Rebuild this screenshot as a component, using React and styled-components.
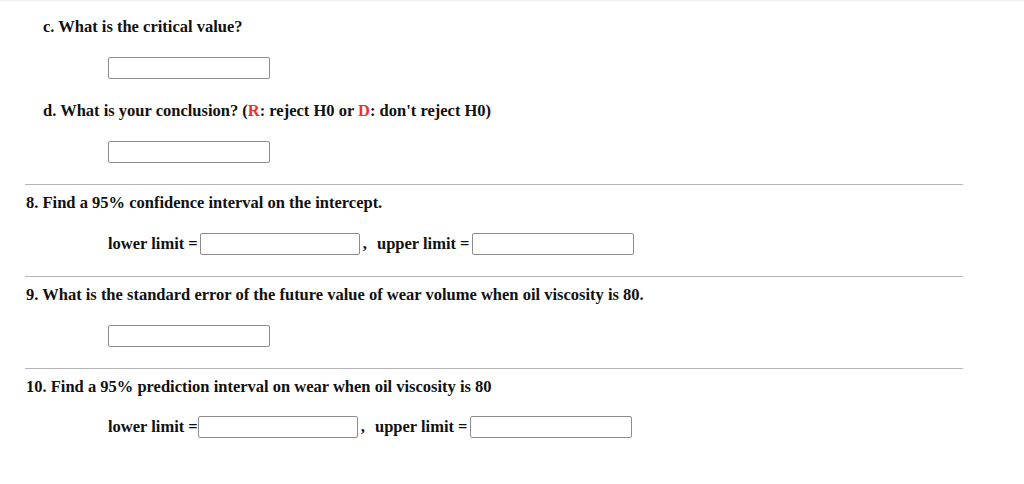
import React from 'react'
import styled, { createGlobalStyle } from 'styled-components'

const GlobalStyle = createGlobalStyle`
  body {
    margin: 0;
    background: #fff;
    font-family: "Liberation Serif", "Times New Roman", serif;
    color: #111;
  }
`

function App() {
  return (
    <Page>
      <GlobalStyle />
      <SubQuestion>
        <Prompt>c. What is the critical value?</Prompt>
        <AnswerRow $indent={65}><Answer /></AnswerRow>
      </SubQuestion>
      <SubQuestion>
        <Prompt>
          d. What is your conclusion? (<Red>R</Red>: reject H0 or <Red>D</Red>: don't reject H0)
        </Prompt>
        <AnswerRow $indent={65}><Answer /></AnswerRow>
      </SubQuestion>

      <Question>
        <Prompt>8. Find a 95% confidence interval on the intercept.</Prompt>
        <AnswerRow>
          <Label>lower limit =</Label><Answer $w={160} $ml={2} />
          <Label $ml={3}><Comma>,</Comma> upper limit =</Label><Answer $w={162} $ml={2} />
        </AnswerRow>
      </Question>

      <Question>
        <Prompt>9. What is the standard error of the future value of wear volume when oil viscosity is 80.</Prompt>
        <AnswerRow><Answer /></AnswerRow>
      </Question>

      <Question>
        <Prompt>10. Find a 95% prediction interval on wear when oil viscosity is 80</Prompt>
        <AnswerRow $mt={18}>
          <Label>lower limit =</Label><Answer $w={160} $ml={0} />
          <Label $ml={3}><Comma>,</Comma> upper limit =</Label><Answer $w={162} $ml={2} />
        </AnswerRow>
      </Question>
    </Page>
  )
}

export default App

const Page = styled.div`
  width: 938px;
  margin-left: 25px;
  padding-top: 16px;
  &::before {
    content: "";
    position: fixed;
    top: 0;
    left: 0;
    right: 0;
    height: 2px;
    background: linear-gradient(#ececec, #fff);
  }
`

const SubQuestion = styled.div`
  padding-left: 18px;
  padding-bottom: 21px;
`

const Question = styled.div`
  border-top: 1px solid #b5b5b5;
  padding-top: 7px;
  padding-bottom: 21px;
  padding-left: 1px;
`

const Prompt = styled.div`
  font-size: 16.5px;
  font-weight: bold;
  line-height: 22px;
`

const Red = styled.span`
  color: #e8352a;
`

const AnswerRow = styled.div`
  display: flex;
  align-items: center;
  margin-top: ${p => p.$mt || 19}px;
  padding-left: ${p => p.$indent || 82}px;
`

const Label = styled.span`
  font-size: 16.5px;
  font-weight: bold;
  white-space: pre;
  margin-left: ${p => p.$ml || 0}px;
`

const Comma = styled.span`
  margin-right: 6px;
`

const Answer = styled.input.attrs({ type: 'text' })`
  box-sizing: border-box;
  width: ${p => p.$w || 162}px;
  height: 22px;
  margin-left: ${p => p.$ml || 0}px;
  border: 1px solid #8d8d8d;
  border-radius: 2px;
  padding: 0 4px;
  background: #fff;
`
